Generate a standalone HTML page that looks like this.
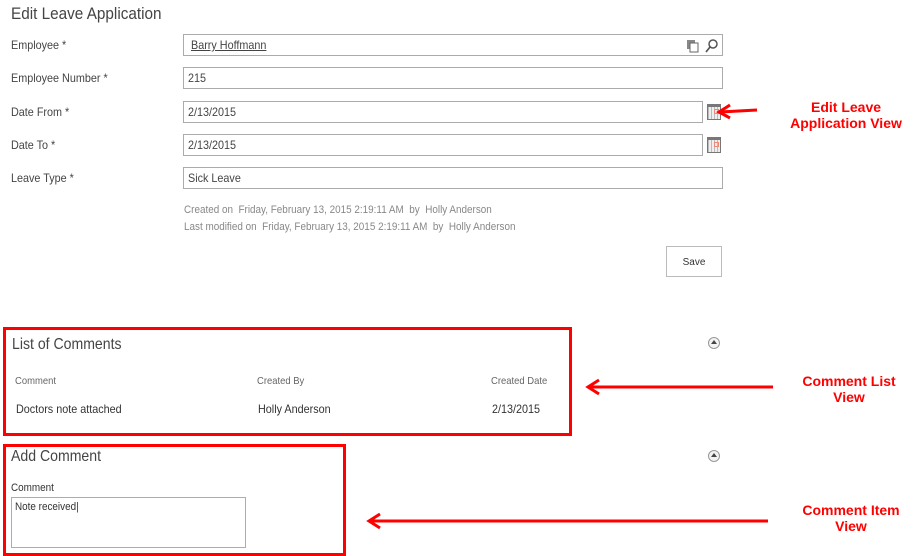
<!DOCTYPE html>
<html><head><style>
body{margin:0;width:923px;height:556px;background:#fff;position:relative;overflow:hidden;font-family:"Liberation Sans",sans-serif;color:#444}
.a{position:absolute;white-space:nowrap}
.l{font-size:12px;color:#444;transform:scaleX(.9);transform-origin:left}
.in{position:absolute;left:183px;height:20px;border:1px solid #ababab;background:#fff;font-size:12px;line-height:21px;padding-left:4px;box-sizing:content-box;color:#444}
.in span{display:inline-block;transform:scaleX(.9);transform-origin:left}
.red{position:absolute;border:3px solid #f00;box-sizing:border-box}
.rt{position:absolute;color:#f00;font-weight:bold;font-size:14px;text-align:center;line-height:16px}
.cal{position:absolute;width:12px;height:12px;border:1px solid #777;background:repeating-linear-gradient(90deg,#bbb 0 1px,#eee 1px 3px);border-top:3px solid #777}
.cal:after{content:"";position:absolute;right:1px;top:2px;width:3px;height:3px;border:1px solid #e87}
.circ{position:absolute;width:10px;height:10px;border:1px solid #999;border-radius:50%;background:#f3f3f3}
.circ:after{content:"";position:absolute;left:2px;top:2px;border-left:3px solid transparent;border-right:3px solid transparent;border-bottom:4px solid #444}
</style></head><body>
<div class="a" style="left:11px;top:4px;font-size:17px;color:#444;transform:scaleX(.9);transform-origin:left">Edit Leave Application</div>
<div class="a l" style="left:11px;top:38px">Employee *</div>
<div class="a l" style="left:11px;top:71px">Employee Number *</div>
<div class="a l" style="left:11px;top:105px">Date From *</div>
<div class="a l" style="left:11px;top:138px">Date To *</div>
<div class="a l" style="left:11px;top:171px">Leave Type *</div>
<div class="in" style="top:34px;width:531px;padding-left:7px"><span style="text-decoration:underline">Barry Hoffmann</span></div>
<svg class="a" style="left:686px;top:38px" width="34" height="16"><rect x="1" y="2" width="8" height="9" fill="#888"/><rect x="4" y="5" width="8" height="9" fill="#fff" stroke="#666"/><circle cx="27" cy="6" r="4" fill="none" stroke="#555" stroke-width="1.5"/><line x1="24" y1="9" x2="20" y2="14" stroke="#555" stroke-width="1.7"/></svg>
<div class="in" style="top:67px;width:534px"><span>215</span></div>
<div class="in" style="top:101px;width:514px"><span>2/13/2015</span></div>
<div class="cal" style="left:707px;top:104px"></div>
<div class="in" style="top:134px;width:514px"><span>2/13/2015</span></div>
<div class="cal" style="left:707px;top:137px"></div>
<div class="in" style="top:167px;width:534px"><span>Sick Leave</span></div>
<div class="a l" style="left:184px;top:204px;color:#888;font-size:11px">Created on &nbsp;Friday, February 13, 2015 2:19:11 AM &nbsp;by &nbsp;Holly Anderson</div>
<div class="a l" style="left:184px;top:221px;color:#888;font-size:11px">Last modified on &nbsp;Friday, February 13, 2015 2:19:11 AM &nbsp;by &nbsp;Holly Anderson</div>
<div class="a" style="left:666px;top:246px;width:54px;height:29px;border:1px solid #bbb;font-size:10px;text-align:center;line-height:32px;color:#333">Save</div>

<div class="red" style="left:3px;top:327px;width:569px;height:109px"></div>
<div class="a" style="left:12px;top:336px;font-size:16px;color:#444;transform:scaleX(.88);transform-origin:left">List of Comments</div>
<div class="a l" style="left:15px;top:375px;font-size:10.5px;color:#666">Comment</div>
<div class="a l" style="left:257px;top:375px;font-size:10.5px;color:#666">Created By</div>
<div class="a l" style="left:491px;top:375px;font-size:10.5px;color:#666">Created Date</div>
<div class="a l" style="left:16px;top:402px;color:#333">Doctors note attached</div>
<div class="a l" style="left:258px;top:402px;color:#333">Holly Anderson</div>
<div class="a l" style="left:492px;top:402px;color:#333">2/13/2015</div>
<div class="circ" style="left:708px;top:337px"></div>

<div class="red" style="left:3px;top:444px;width:343px;height:112px"></div>
<div class="a" style="left:11px;top:448px;font-size:16px;color:#444;transform:scaleX(.88);transform-origin:left">Add Comment</div>
<div class="a l" style="left:11px;top:482px;font-size:11px;color:#333">Comment</div>
<div class="a" style="left:11px;top:497px;width:233px;height:49px;border:1px solid #8ab4d8"></div>
<div class="a l" style="left:15px;top:501px;font-size:11px;color:#333">Note received|</div>
<div class="circ" style="left:708px;top:450px"></div>

<svg class="a" style="left:0;top:0" width="923" height="556">
<g stroke="#f00" stroke-width="3" fill="none">
<line x1="720" y1="112" x2="757" y2="110"/><polyline points="730,105 719,112 730,118"/>
<line x1="589" y1="387" x2="773" y2="387"/><polyline points="599,380 588,387 599,394"/>
<line x1="370" y1="521" x2="768" y2="521"/><polyline points="380,514 369,521 380,528"/>
</g></svg>
<div class="rt" style="left:776px;top:99px;width:140px">Edit Leave<br>Application View</div>
<div class="rt" style="left:779px;top:373px;width:140px">Comment List<br>View</div>
<div class="rt" style="left:781px;top:502px;width:140px">Comment Item<br>View</div>
</body></html>
